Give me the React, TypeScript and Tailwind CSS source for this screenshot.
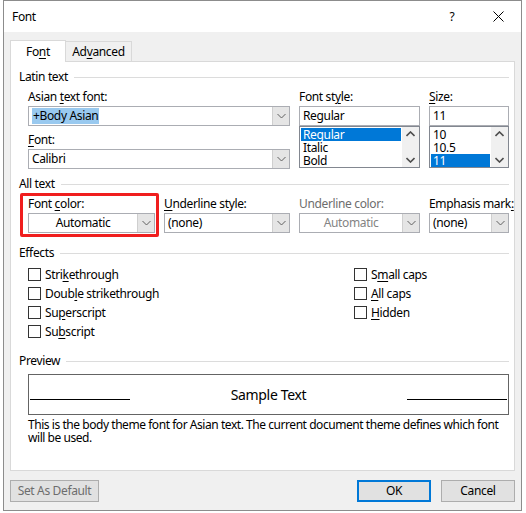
import React from 'react';

const U = ({ text, at }: { text: string; at: number }) => (
  <>
    {text.slice(0, at)}
    <span className="underline underline-offset-[2px]">{text[at]}</span>
    {text.slice(at + 1)}
  </>
);

const Chevron = ({ up = false, bold = false }: { up?: boolean; bold?: boolean }) => (
  <svg width="9" height="6" viewBox="0 0 9 6" className="block">
    <polyline
      points={up ? '0.5,5 4.5,1 8.5,5' : '0.5,1 4.5,5 8.5,1'}
      fill="none"
      stroke={bold ? '#4d4d4d' : '#606060'}
      strokeWidth={bold ? 1.6 : 1}
    />
  </svg>
);

const Heading = ({ label }: { label: string }) => (
  <div className="flex items-center h-[16px]">
    <span className="whitespace-nowrap">{label}</span>
    <div className="flex-1 h-px bg-[#dcdcdc] ml-[6px]" />
  </div>
);

const Dropdown = ({
  children,
  center = false,
  disabled = false,
}: {
  children: React.ReactNode;
  center?: boolean;
  disabled?: boolean;
}) => (
  <div className="flex h-[20px] border border-[#abadb3] bg-white">
    <div
      className={`flex-1 flex items-center overflow-hidden whitespace-nowrap ${
        center ? 'justify-center' : 'pl-[3px]'
      } ${disabled ? 'text-[#838383]' : ''}`}
    >
      {children}
    </div>
    <div className="w-[17px] h-full bg-[#e5e5e5] border-l border-[#cfcfcf] flex items-center justify-center">
      <Chevron />
    </div>
  </div>
);

const ListBox = ({ items, selected }: { items: string[]; selected: number }) => (
  <div className="flex h-[42px] border border-[#828790] bg-white">
    <div className="flex-1 p-[1px]">
      {items.map((it, i) => (
        <div
          key={it}
          className={`h-[13px] leading-[13px] pl-[2px] ${i === selected ? 'bg-[#0078d7] text-white' : ''}`}
        >
          {it}
        </div>
      ))}
    </div>
    <div className="w-[17px] bg-[#f0f0f0] flex flex-col items-center justify-between py-[4px]">
      <Chevron up bold />
      <Chevron bold />
    </div>
  </div>
);

const Check = ({ children }: { children: React.ReactNode }) => (
  <div className="flex items-center h-[19px]">
    <div className="w-[13px] h-[13px] border border-[#333333] bg-white" />
    <span className="ml-[4px] whitespace-nowrap">{children}</span>
  </div>
);

export default function App() {
  return (
    <div className="w-[526px] h-[513px] bg-white font-['Noto_Sans',sans-serif] text-[12px] leading-[16px] tracking-[-0.35px] text-black">
      <div className="ml-[3px] w-[519px] h-[511px] border border-[#8c8c8c] flex flex-col">
        {/* title bar */}
        <div className="h-[31px] bg-white flex items-center pl-[8px]">
          <span>Font</span>
          <div className="ml-auto flex items-center">
            <div className="w-[46px] text-center">?</div>
            <div className="w-[46px] flex justify-center">
              <svg width="11" height="11" viewBox="0 0 11 11">
                <path d="M0.5 0.5 L10.5 10.5 M10.5 0.5 L0.5 10.5" stroke="#000" strokeWidth="1" />
              </svg>
            </div>
          </div>
        </div>

        {/* body */}
        <div className="flex-1 bg-[#f0f0f0] px-[6px] pt-[8px]">
          <div className="flex items-end h-[21px]">
            <div className="relative z-10 w-[56px] h-[22px] -mb-px bg-white border border-b-0 border-[#d9d9d9] flex items-center justify-center">
              Fo<U text="nt" at={0} />
            </div>
            <div className="-ml-px w-[67px] h-[20px] bg-[#f0f0f0] border border-b-0 border-[#d9d9d9] flex items-center justify-center">
              Ad<U text="vanced" at={0} />
            </div>
          </div>

          <div className="w-[505px] h-[410px] border border-[#d9d9d9] bg-white pl-[8px] pr-[5px] pt-[7px]">
            <Heading label="Latin text" />
            <div className="ml-[9px] mt-[4px] flex gap-[9px]">
              <div className="w-[262px]">
                <div className="h-[17px]">
                  Asian <U text="text font:" at={0} />
                </div>
                <Dropdown>
                  <span className="bg-[#99c9ef] px-px">+Body Asian</span>
                </Dropdown>
                <div className="h-[17px] mt-[6px]">
                  <U text="Font:" at={0} />
                </div>
                <Dropdown>Calibri</Dropdown>
              </div>
              <div className="w-[121px]">
                <div className="h-[17px]">
                  Font st<U text="yle:" at={0} />
                </div>
                <div className="h-[20px] border border-[#abadb3] bg-white pl-[3px] flex items-center">Regular</div>
                <ListBox items={['Regular', 'Italic', 'Bold']} selected={0} />
              </div>
              <div className="w-[80px]">
                <div className="h-[17px]">
                  <U text="Size:" at={0} />
                </div>
                <div className="h-[20px] border border-[#abadb3] bg-white pl-[3px] flex items-center">11</div>
                <ListBox items={['10', '10.5', '11']} selected={2} />
              </div>
            </div>

            <div className="mt-[7px]">
              <Heading label="All text" />
            </div>
            <div className="ml-[9px] mt-[4px] flex gap-[9px]">
              <div className="relative w-[127px]">
                <div className="h-[17px]">
                  Font <U text="color:" at={0} />
                </div>
                <Dropdown center>Automatic</Dropdown>
                <div className="absolute left-[-8px] right-[-4px] top-[-3px] bottom-[-4px] border-[3px] border-[#f01e1e] rounded-[2px]" />
              </div>
              <div className="w-[126px]">
                <div className="h-[17px]">
                  <U text="Underline style:" at={0} />
                </div>
                <Dropdown>(none)</Dropdown>
              </div>
              <div className="w-[121px]">
                <div className="h-[17px] text-[#6d6d6d]">Underline color:</div>
                <Dropdown center disabled>
                  Automatic
                </Dropdown>
              </div>
              <div className="w-[80px]">
                <div className="h-[17px] whitespace-nowrap">
                  Emphasis mark<U text=":" at={0} />
                </div>
                <Dropdown>(none)</Dropdown>
              </div>
            </div>

            <div className="mt-[12px]">
              <Heading label="Effects" />
            </div>
            <div className="ml-[9px] mt-[4px] grid grid-cols-[326px_1fr]">
              <div>
                <Check>
                  Stri<U text="kethrough" at={0} />
                </Check>
                <Check>
                  Doub<U text="le strikethrough" at={0} />
                </Check>
                <Check>
                  Su<U text="perscript" at={0} />
                </Check>
                <Check>
                  Su<U text="bscript" at={0} />
                </Check>
              </div>
              <div>
                <Check>
                  S<U text="mall caps" at={0} />
                </Check>
                <Check>
                  <U text="All caps" at={0} />
                </Check>
                <Check>
                  <U text="Hidden" at={0} />
                </Check>
              </div>
            </div>

            <div className="mt-[12px]">
              <Heading label="Preview" />
            </div>
            <div className="ml-[9px] mt-[5px] h-[41px] border border-[#646464] flex items-center px-[1px]">
              <div className="w-[100px] h-px bg-black mt-[10px]" />
              <div className="flex-1 text-center text-[14px]">Sample Text</div>
              <div className="w-[100px] h-px bg-black mt-[10px]" />
            </div>
            <p className="ml-[9px] mt-[3px] leading-[13px] tracking-[-0.45px]">
              This is the body theme font for Asian text. The current document theme defines which font
              <br />
              will be used.
            </p>
          </div>

          <div className="mt-[9px] flex gap-[10px]">
            <button className="w-[89px] h-[22px] bg-[#e1e1e1] border border-[#adadad] text-[#6d6d6d]">
              Set As Default
            </button>
            <button className="ml-auto w-[74px] h-[22px] bg-[#e1e1e1] border-2 border-[#0078d7]">OK</button>
            <button className="w-[74px] h-[22px] bg-[#e1e1e1] border border-[#adadad]">Cancel</button>
          </div>
        </div>
      </div>
    </div>
  );
}
